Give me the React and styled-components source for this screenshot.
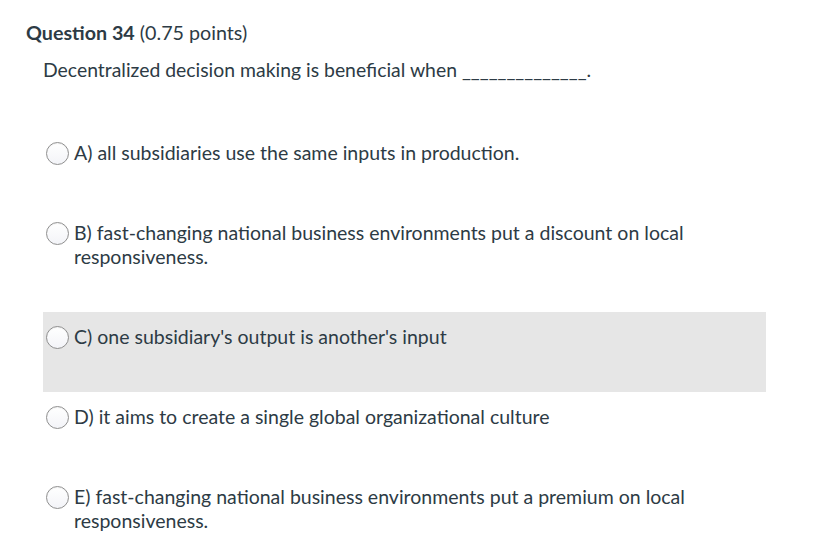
import React from "react";
import styled, { createGlobalStyle } from "styled-components";

const GlobalStyle = createGlobalStyle`
  html, body {
    margin: 0;
    padding: 0;
    background: #ffffff;
  }
  body {
    font-family: Lato, "Open Sans", "Liberation Sans", sans-serif;
    color: #2d3b45;
  }
`;

const options = [
  { id: "a", text: "A) all subsidiaries use the same inputs in production." },
  { id: "b", text: "B) fast-changing national business environments put a discount on local responsiveness." },
  { id: "c", text: "C) one subsidiary's output is another's input", hover: true },
  { id: "d", text: "D) it aims to create a single global organizational culture" },
  { id: "e", text: "E) fast-changing national business environments put a premium on local responsiveness." },
];

const App = () => {
  return (
    <>
      <GlobalStyle />
      <Page>
        <Header>
          <Title>Question 34</Title> (0.75 points)
        </Header>
        <Prompt>Decentralized decision making is beneficial when ______________.</Prompt>
        <Answers>
          {options.map((o) => (
            <Answer key={o.id} $hover={o.hover}>
              <Radio />
              <AnswerText>{o.text}</AnswerText>
            </Answer>
          ))}
        </Answers>
      </Page>
    </>
  );
};

export default App;

const Page = styled.div`
  width: 834px;
  height: 558px;
  padding: 21px 0 0 26px;
  box-sizing: border-box;
`;

const Header = styled.div`
  font-size: 19.7px;
  line-height: 24px;
  font-weight: 400;
`;

const Title = styled.span`
  font-weight: 700;
`;

const Prompt = styled.div`
  margin: 13px 0 0 17px;
  font-size: 19.4px;
  line-height: 24px;
`;

const Answers = styled.div`
  margin: 46px 0 0 17px;
  width: 723px;
`;

const Answer = styled.label`
  display: flex;
  align-items: flex-start;
  padding: 13px 0 43px 3px;
  background: ${(p) => (p.$hover ? "#e6e6e6" : "transparent")};
  font-size: 19.5px;
  line-height: 24px;
`;

const Radio = styled.span`
  flex: none;
  width: 21px;
  height: 21px;
  margin: 1px 5px 0 0;
  border-radius: 50%;
  border: 1px solid #8f8f8f;
  background: linear-gradient(#ffffff, #f3f4f8);
  box-shadow: inset 0 1px 1px rgba(0, 0, 0, 0.05);
`;

const AnswerText = styled.span`
  max-width: 645px;
`;
